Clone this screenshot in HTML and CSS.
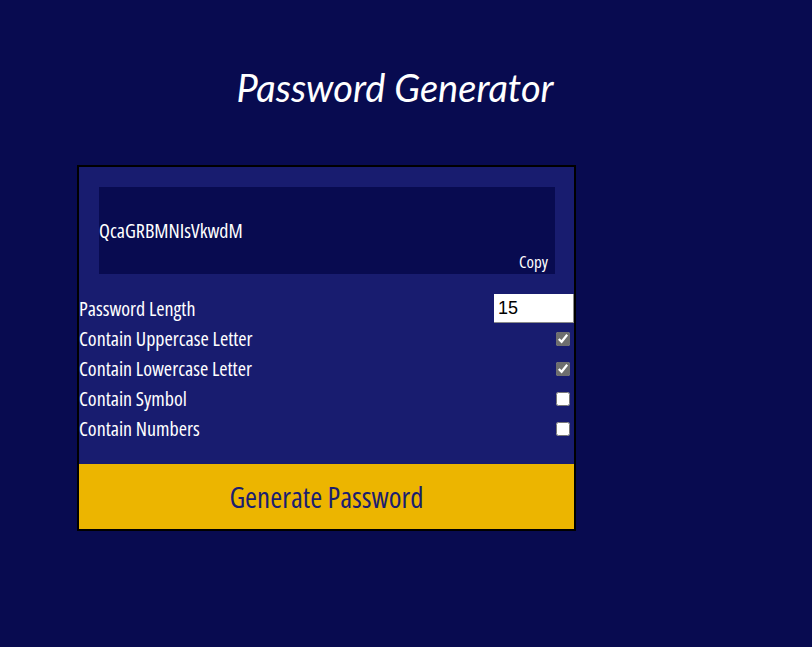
FILE: index.html
```html
<!DOCTYPE html>
<html lang="en">
<head>
<meta charset="utf-8">
<title>Password Generator</title>
<link rel="stylesheet" href="styles.css">
</head>
<body>
  <h1 class="title">Password Generator</h1>
  <div class="card">
    <div class="output">
      <span class="pw">QcaGRBMNIsVkwdM</span>
      <span class="copy">Copy</span>
    </div>
    <div class="rows">
      <div class="row">
        <label class="lbl">Password Length</label>
        <input class="len" type="number" value="15">
      </div>
      <div class="row">
        <label class="lbl">Contain Uppercase Letter</label>
        <input class="chk" type="checkbox" checked>
      </div>
      <div class="row">
        <label class="lbl">Contain Lowercase Letter</label>
        <input class="chk" type="checkbox" checked>
      </div>
      <div class="row">
        <label class="lbl">Contain Symbol</label>
        <input class="chk" type="checkbox">
      </div>
      <div class="row">
        <label class="lbl">Contain Numbers</label>
        <input class="chk" type="checkbox">
      </div>
    </div>
    <button class="gen">Generate Password</button>
  </div>
</body>
</html>
```
FILE: styles.css
```css
* { box-sizing: border-box; }
html, body { height: 100%; }
body {
  margin: 0;
  background: #080b50;
  color: #fff;
  font-family: "Open Sans", "DejaVu Sans", sans-serif;
  font-stretch: 75%;
}
.title {
  margin: 64px 22px 0 0;
  text-align: center;
  font-family: Lato, sans-serif;
  font-style: italic;
  font-weight: 400;
  font-stretch: normal;
  font-size: 38px;
  line-height: 46px;
  color: #fff;
}
.card {
  margin: 55px 0 0 77px;
  width: 499px;
  border: 2px solid #000;
  background: #181c6f;
}
.output {
  position: relative;
  margin: 20px 19px 0 20px;
  height: 87px;
  background: #080b50;
  display: flex;
  align-items: center;
}
.pw {
  font-size: 20px;
  color: #fff;
}
.copy {
  position: absolute;
  right: 7px;
  bottom: 1px;
  font-size: 17px;
  color: #fff;
}
.rows {
  margin-top: 20px;
  display: flex;
  flex-direction: column;
}
.row {
  height: 30px;
  display: flex;
  align-items: center;
  justify-content: space-between;
}
.lbl {
  font-size: 20px;
  line-height: 28px;
  color: #fff;
}
.len {
  width: 80px;
  height: 29px;
  margin: 0 0 1px 0;
  padding: 0 4px;
  border: none;
  border-right: 1px solid #8a8a8a;
  border-bottom: 1px solid #8a8a8a;
  background: #fff;
  font-family: "Liberation Sans", Arial, sans-serif;
  font-stretch: normal;
  font-size: 18px;
  color: #000;
}
.len::-webkit-inner-spin-button,
.len::-webkit-outer-spin-button { -webkit-appearance: none; margin: 0; }
.chk {
  box-sizing: content-box;
  width: 14px;
  height: 14px;
  margin: 3px 4px 3px 4px;
  accent-color: #6e6e6e;
}
.gen {
  display: block;
  width: 100%;
  height: 65px;
  margin-top: 20px;
  border: none;
  background: #ecb500;
  color: #1b1e70;
  font-family: "Open Sans", "DejaVu Sans", sans-serif;
  font-stretch: 75%;
  font-size: 29px;
  cursor: pointer;
}
```
